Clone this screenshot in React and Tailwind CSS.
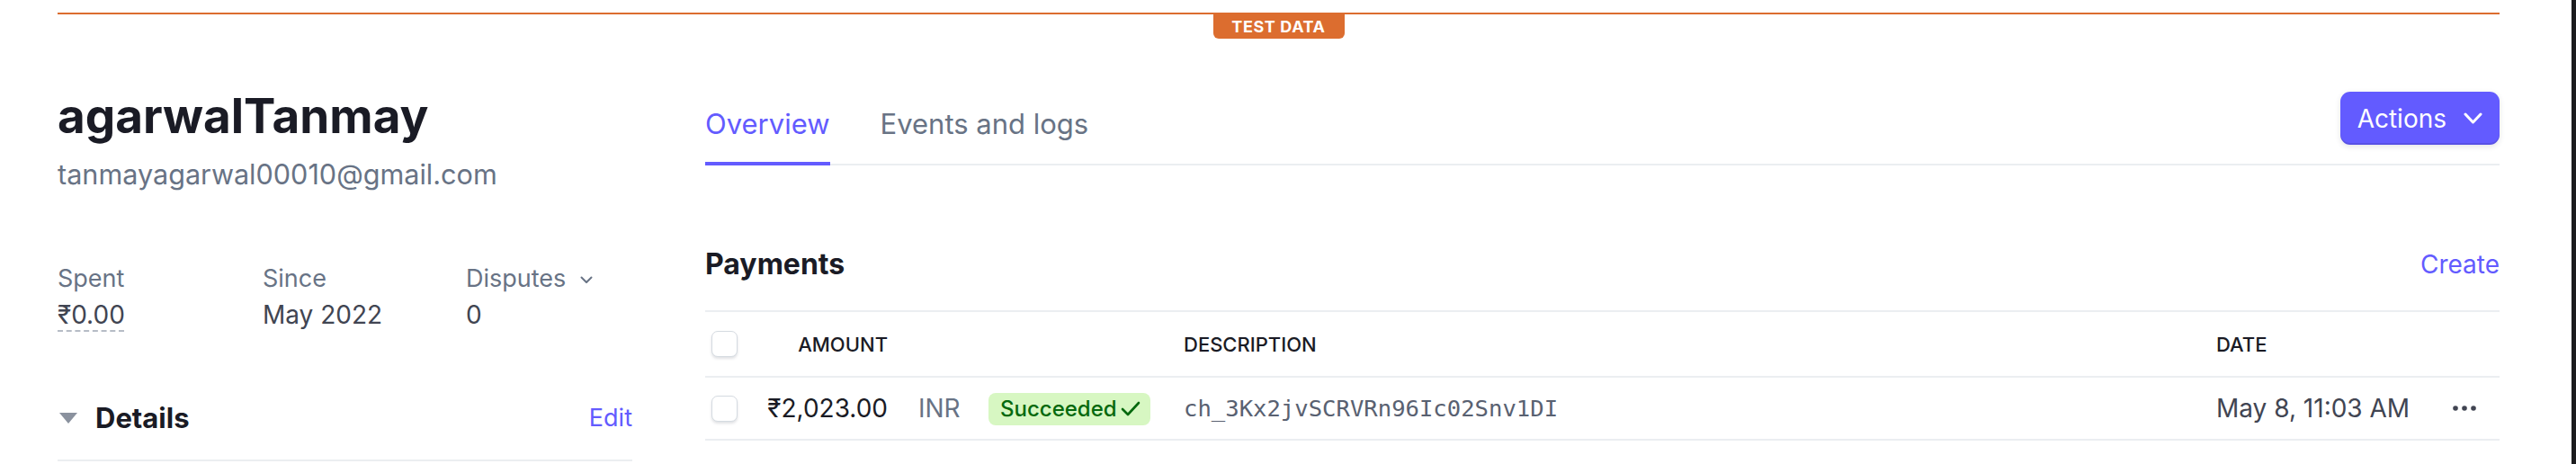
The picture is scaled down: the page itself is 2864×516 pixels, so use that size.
import React from "react";

function Checkbox() {
  return (
    <div className="w-[29px] h-[29px] rounded-[7px] border border-[#d5dbe1] bg-white shadow-[0_2px_3px_rgba(60,66,87,0.16)]" />
  );
}

function Chevron({ className }) {
  return (
    <svg className={className} viewBox="0 0 21 13" fill="none">
      <path d="M2 2L10.5 11L19 2" stroke="currentColor" strokeWidth="3" strokeLinecap="round" strokeLinejoin="round" />
    </svg>
  );
}

export default function App() {
  return (
    <div className="flex w-[2864px] h-[516px] bg-white overflow-hidden font-['Inter',sans-serif] text-[#1a1b25]">
      <div className="flex-1">
        <div className="ml-[64px] w-[2715px]">
          <div className="mt-[14px] h-[2px] bg-[#dc6d2f] relative">
            <div className="absolute top-full left-1/2 -translate-x-1/2 w-[146px] h-[27px] rounded-b-[6px] bg-[#dc6d2f] text-white text-[18px] leading-[27px] font-bold tracking-[0.6px] text-center">
              TEST DATA
            </div>
          </div>

          <div className="flex items-start">
            {/* Left column */}
            <div className="w-[639px] pt-[82px]">
              <div className="text-[53px] leading-[62px] font-bold text-[#1a1b25]">agarwalTanmay</div>
              <div className="mt-[16px] text-[30.6px] leading-[36px] text-[#687385]">tanmayagarwal00010@gmail.com</div>

              <div className="mt-[81px] flex">
                <div className="w-[228px]">
                  <div className="text-[27px] leading-[34px] text-[#687385]">Spent</div>
                  <div className="mt-[6px] text-[28px] leading-[34px] text-[#414552]">
                    <span className="underline decoration-dashed decoration-2 decoration-[#b6bcc6] underline-offset-[7px]">₹0.00</span>
                  </div>
                </div>
                <div className="w-[226px]">
                  <div className="text-[27px] leading-[34px] text-[#687385]">Since</div>
                  <div className="mt-[6px] text-[28px] leading-[34px] text-[#414552]">May 2022</div>
                </div>
                <div className="flex-1">
                  <div className="flex items-center gap-[16px] text-[27px] leading-[34px] text-[#687385]">
                    <span>Disputes</span>
                    <svg className="w-[14px] h-[9px] mt-[2px]" viewBox="0 0 14 9" fill="none">
                      <path d="M1.5 1.5L7 7L12.5 1.5" stroke="#687385" strokeWidth="2" strokeLinecap="round" strokeLinejoin="round" />
                    </svg>
                  </div>
                  <div className="mt-[6px] text-[28px] leading-[34px] text-[#414552]">0</div>
                </div>
              </div>

              <div className="mt-[78px] h-[40px] flex items-center justify-between">
                <div className="flex items-center">
                  <svg className="ml-[2px] w-[20px] h-[12px]" viewBox="0 0 20 12">
                    <polygon points="0,0 20,0 10,12" fill="#8a919e" />
                  </svg>
                  <span className="ml-[20px] text-[31px] leading-[40px] font-bold text-[#1a1b25]">Details</span>
                </div>
                <span className="text-[27px] leading-[40px] text-[#635bff]">Edit</span>
              </div>
              <div className="mt-[26px] h-[2px] bg-[#ebeef1]" />
            </div>

            {/* Right column */}
            <div className="ml-[81px] flex-1 pt-[86px]">
              <div className="flex items-start justify-between border-b-2 border-[#ebeef1]">
                <div className="flex gap-[56px]">
                  <div className="pt-[17px] pb-[23px] border-b-4 border-[#635bff] -mb-[2px] text-[31px] leading-[38px] text-[#635bff]">
                    Overview
                  </div>
                  <div className="pt-[17px] pb-[23px] border-b-4 border-transparent -mb-[2px] text-[31px] leading-[38px] text-[#687385]">
                    Events and logs
                  </div>
                </div>
                <button className="h-[59px] px-[19px] flex items-center gap-[19px] rounded-[11px] bg-[#635bff] text-white text-[28px] leading-[36px] shadow-[0_2px_6px_rgba(60,66,87,0.14),inset_0_-2px_0_rgba(0,0,0,0.1)]">
                  <span>Actions</span>
                  <Chevron className="w-[21px] h-[13px]" />
                </button>
              </div>

              <div className="mt-[90px] h-[40px] flex items-center justify-between">
                <span className="text-[32px] leading-[40px] font-bold text-[#1a1b25]">Payments</span>
                <span className="text-[28px] leading-[40px] text-[#635bff]">Create</span>
              </div>

              <div className="mt-[31px] border-t-2 border-[#ebeef1]">
                <div className="h-[73px] flex items-center border-b-2 border-[#ebeef1] text-[22px] leading-[30px] font-medium text-[#1a1b25]">
                  <div className="w-[52px] pl-[7px]"><Checkbox /></div>
                  <div className="w-[151px] text-right">AMOUNT</div>
                  <div className="w-[112px]" />
                  <div className="w-[217px]" />
                  <div className="flex-1">DESCRIPTION</div>
                  <div className="w-[253px]">DATE</div>
                  <div className="w-[62px]" />
                </div>
                <div className="h-[70px] flex items-center border-b-2 border-[#ebeef1] text-[28px] leading-[34px]">
                  <div className="w-[52px] pl-[7px]"><Checkbox /></div>
                  <div className="w-[151px] text-right text-[#1a1b25]">₹2,023.00</div>
                  <div className="w-[112px] pl-[34px] text-[#687385]">INR</div>
                  <div className="w-[217px]">
                    <span className="inline-flex items-center h-[36px] pl-[13px] pr-[11px] rounded-[8px] bg-[#d7f7c2] text-[#05690d] text-[24px] leading-[30px] font-medium gap-[4px]">
                      Succeeded
                      <svg className="w-[22px] h-[17px]" viewBox="0 0 22 17" fill="none">
                        <path d="M2 9L8 15L20 2" stroke="currentColor" strokeWidth="2.6" strokeLinecap="round" strokeLinejoin="round" />
                      </svg>
                    </span>
                  </div>
                  <div className="flex-1 font-['DejaVu_Sans_Mono',monospace] text-[25.6px] text-[#596171]">ch_3Kx2jvSCRVRn96Ic02Snv1DI</div>
                  <div className="w-[253px] text-[#414552]">May 8, 11:03 AM</div>
                  <div className="w-[62px] pl-[10px]">
                    <svg className="w-[26px] h-[6px]" viewBox="0 0 26 6">
                      <circle cx="3" cy="3" r="2.8" fill="#414552" />
                      <circle cx="13" cy="3" r="2.8" fill="#414552" />
                      <circle cx="23" cy="3" r="2.8" fill="#414552" />
                    </svg>
                  </div>
                </div>
              </div>
            </div>
          </div>
        </div>
      </div>
      <div className="w-[5px] bg-[#1c1c1e]" />
    </div>
  );
}
